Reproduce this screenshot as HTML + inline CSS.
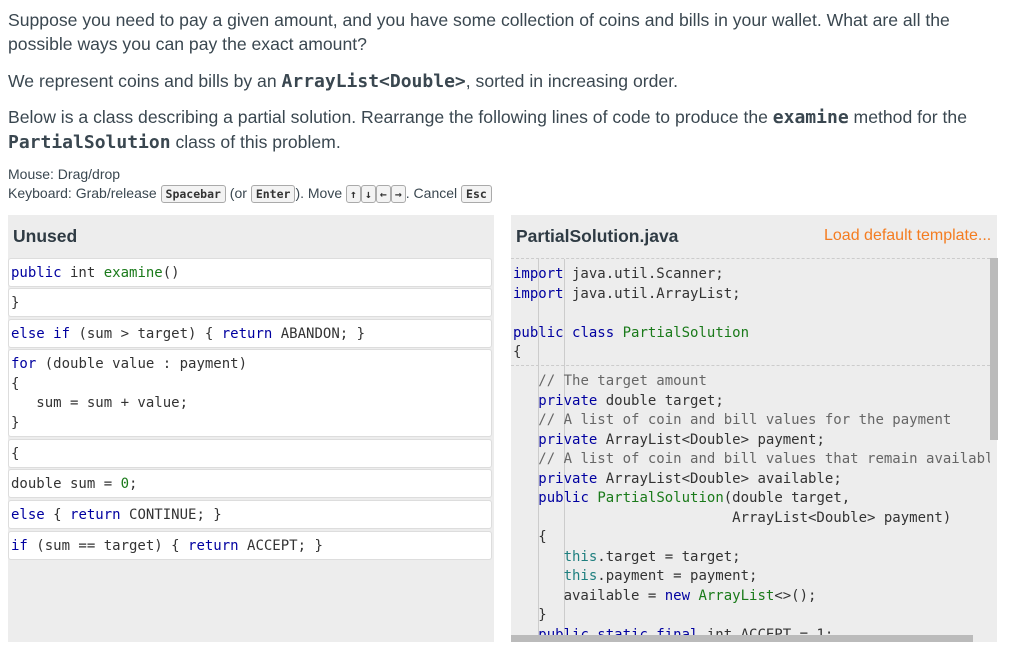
<!DOCTYPE html>
<html><head><style>
body{margin:0;background:#fff;font-family:"Liberation Sans",sans-serif;color:#3a4750;width:1024px;height:647px;overflow:hidden;position:relative}
.p{position:absolute;left:8px;font-size:17.6px;line-height:24px;margin:0;white-space:nowrap}
.m{font-family:"DejaVu Sans Mono",monospace;font-weight:bold;font-size:18px}
.small{position:absolute;left:8px;font-size:14px;line-height:19px;white-space:nowrap}
kbd{font-family:"DejaVu Sans Mono",monospace;font-weight:bold;font-size:11.5px;border:1px solid #aaa;border-radius:3px;background:#f3f3f3;padding:1px 4px;display:inline-block;line-height:14px;color:#333}
.panel{position:absolute;top:215px;height:427px;background:#ededed}
.hd{position:absolute;top:226px;font-weight:bold;font-size:17.5px;color:#2f3b44}
.blk{position:absolute;left:8px;width:484px;background:#fff;border:1px solid #ddd;border-radius:3px;box-sizing:border-box;font-family:"DejaVu Sans Mono",monospace;font-size:14px;line-height:19.5px;padding:5px 2px 3px;white-space:pre;color:#333}
.k{color:#0000a0}.g{color:#1a7a1a}.c{color:#666}.t{color:#1f7f7f}
.code{position:absolute;font-family:"DejaVu Sans Mono",monospace;font-size:14px;line-height:19.5px;white-space:pre;color:#333}
</style></head><body>
<p class="p" style="top:8px">Suppose you need to pay a given amount, and you have some collection of coins and bills in your wallet. What are all the<br>possible ways you can pay the exact amount?</p>
<p class="p" style="top:69px">We represent coins and bills by an <span class="m">ArrayList&lt;Double&gt;</span>, sorted in increasing order.</p>
<p class="p" style="top:105px">Below is a class describing a partial solution. Rearrange the following lines of code to produce the <span class="m">examine</span> method for the<br><span class="m">PartialSolution</span> class of this problem.</p>
<div class="small" style="top:165px">Mouse: Drag/drop</div>
<div class="small" style="top:184px">Keyboard: Grab/release <kbd>Spacebar</kbd> (or <kbd>Enter</kbd>). Move <kbd style="padding:1px 3px">↑</kbd><kbd style="padding:1px 3px">↓</kbd><kbd style="padding:1px 3px">←</kbd><kbd style="padding:1px 3px">→</kbd>. Cancel <kbd>Esc</kbd></div>

<div class="panel" style="left:8px;width:486px"></div>
<div class="hd" style="left:13px">Unused</div>
<div class="blk" style="top:258px;height:29px"><span class="k">public</span> int <span class="g">examine</span>()</div>
<div class="blk" style="top:288px;height:29px">}</div>
<div class="blk" style="top:319px;height:29px"><span class="k">else if</span> (sum &gt; target) { <span class="k">return</span> ABANDON; }</div>
<div class="blk" style="top:349px;height:88px"><span class="k">for</span> (double value : payment)
{
   sum = sum + value;
}</div>
<div class="blk" style="top:439px;height:29px">{</div>
<div class="blk" style="top:469px;height:29px">double sum = <span class="g">0</span>;</div>
<div class="blk" style="top:500px;height:29px"><span class="k">else</span> { <span class="k">return</span> CONTINUE; }</div>
<div class="blk" style="top:531px;height:29px"><span class="k">if</span> (sum == target) { <span class="k">return</span> ACCEPT; }</div>

<div class="panel" style="left:511px;width:486px"></div>
<div class="hd" style="left:516px">PartialSolution.java</div>
<div style="position:absolute;left:824px;top:227px;font-size:16px;color:#f47c20">Load default template...</div>
<div style="position:absolute;left:511px;top:258px;width:479px;border-top:1px dashed #ccc"></div>
<div style="position:absolute;left:511px;top:365px;width:479px;border-top:1px dashed #ccc"></div>
<div style="position:absolute;left:538px;top:259px;height:376px;border-left:1px solid #ccc"></div>
<div style="position:absolute;left:564px;top:259px;height:376px;border-left:1px solid #ccc"></div>
<div style="position:absolute;left:990px;top:258px;width:8px;height:182px;background:#bbb"></div>
<div style="position:absolute;left:511px;top:635px;width:462px;height:7px;background:#bbb"></div>
<div style="position:absolute;left:511px;top:258px;width:479px;height:377px;overflow:hidden">
<div class="code" style="left:2px;top:7px"><span class="k">import</span> java.util.Scanner;
<span class="k">import</span> java.util.ArrayList;

<span class="k">public</span> <span class="k">class</span> <span class="g">PartialSolution</span>
{</div>
<div class="code" style="left:2px;top:114px">   <span class="c">// The target amount</span>
   <span class="k">private</span> double target;
   <span class="c">// A list of coin and bill values for the payment</span>
   <span class="k">private</span> ArrayList&lt;Double&gt; payment;
   <span class="c">// A list of coin and bill values that remain available</span>
   <span class="k">private</span> ArrayList&lt;Double&gt; available;
   <span class="k">public</span> <span class="g">PartialSolution</span>(double target,
                          ArrayList&lt;Double&gt; payment)
   {
      <span class="t">this</span>.target = target;
      <span class="t">this</span>.payment = payment;
      available = <span class="k">new</span> <span class="g">ArrayList</span>&lt;&gt;();
   }
   <span class="k">public static final</span> int ACCEPT = 1;</div>
</div>
</body></html>
